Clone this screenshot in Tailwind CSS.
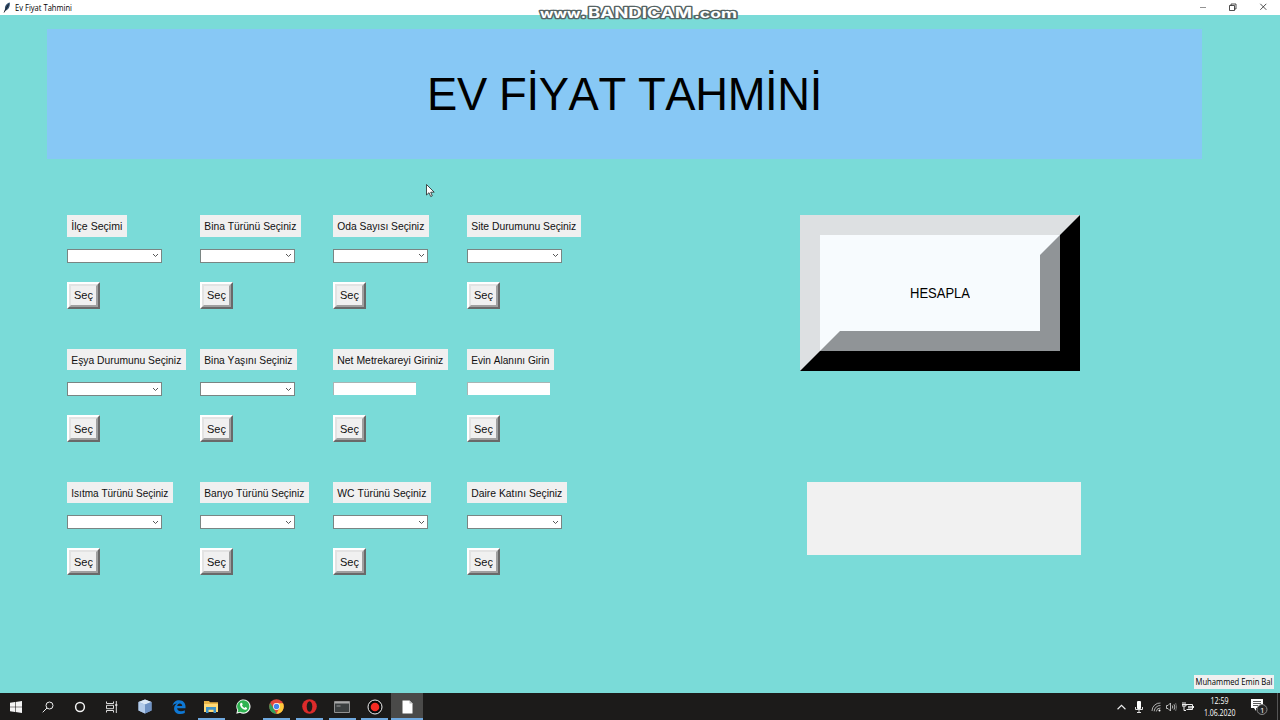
<!DOCTYPE html>
<html lang="tr">
<head>
    <meta charset="UTF-8">
    <meta name="viewport" content="width=device-width, initial-scale=1.0">
    <title>Ev Fiyat Tahmini</title>
    <script src="https://cdn.jsdelivr.net/npm/@tailwindcss/browser@4"></script>
    <style>
        body { font-family: "Liberation Sans", Arial, sans-serif; font-kerning: none; }
        .sys { font-family: "Open Sans", "Noto Sans", sans-serif; }
    </style>
</head>
<body class="relative w-[1280px] h-[720px] overflow-hidden bg-[#7adbd8] flex flex-col text-black">

    <!-- Title bar -->
    <div class="sys h-[15px] shrink-0 bg-white flex items-center pl-[3px]">
        <svg class="w-[8px] h-[11px]" viewBox="0 0 8 11">
            <path d="M1 10.5 2 7C1.500 4 4 1 6.800.5 7.300 4 5.500 8 2.500 8.500Z" fill="#345070"/>
            <path d="M1 10.500 5.500 2.500" stroke="#111" stroke-width=".8"/>
        </svg>
        <svg class="ml-[4px] w-[60px] h-[15px]"><text x="0" y="10.700" font-size="8.500" textLength="57" lengthAdjust="spacingAndGlyphs">Ev Fiyat Tahmini</text></svg>
        <svg class="ml-auto w-[80px] h-[15px]" viewBox="0 0 80 15" fill="none" stroke="#222" stroke-width=".8">
            <path d="M0 7.500h6" stroke="#777"/>
            <path d="M29.500 5.500h5v5h-5zM31 5.500v-1.500h5v5h-1.500"/>
            <path d="M60.300 3.800l6 6M66.300 3.800l-6 6"/>
        </svg>
    </div>

    <!-- Header -->
    <h1 class="mt-[14px] ml-[47px] w-[1155px] h-[129.500px] shrink-0 bg-[#87c8f5] flex items-center justify-center text-[45.330px] tracking-[-0.350px] leading-none pt-[1px]">EV FİYAT TAHMİNİ</h1>

    <!-- Form + result -->
    <div class="mt-[56.830px] ml-[66.660px] flex h-[400px] shrink-0">
        <div id="form" class="grid grid-cols-[repeat(4,133.330px)] grid-rows-[repeat(3,133.330px)]"></div>
        <div class="ml-[200px] flex flex-col items-start">
            <button class="w-[280px] h-[156px] border-[20px] border-t-[#dde0e2] border-l-[#dde0e2] border-r-black border-b-black">
                <span class="flex w-full h-full items-center justify-center border-[20px] border-t-[#f7fbfe] border-l-[#f7fbfe] border-r-[#909497] border-b-[#909497] bg-[#f7fbfe]">
                    <svg class="w-[60px] h-[16px]"><text x="0" y="13" font-size="13.800" textLength="60" lengthAdjust="spacingAndGlyphs">HESAPLA</text></svg>
                </span>
            </button>
            <div class="mt-[111px] ml-[6.660px] w-[274.600px] h-[73px] bg-[#f1f1f1]"></div>
        </div>
    </div>
    <div class="sys mt-[60px] mr-[6px] self-end w-[80px] h-[14px] shrink-0 bg-[#f0f0f0]">
        <svg class="w-[80px] h-[14px]"><text x="1.500" y="10" font-size="8.500" textLength="77" lengthAdjust="spacingAndGlyphs">Muhammed Emin Bal</text></svg>
    </div>

    <!-- Taskbar -->
    <div class="mt-auto h-[27px] shrink-0 bg-[#1c1b1a] flex items-stretch">
        <div class="flex w-[32px] items-center justify-center">
            <svg class="w-[12px] h-[12px]" viewBox="0 0 12 12" fill="#f4f4f4"><path d="M0 1.700 5 1v4.700H0zM5.600.9 12 0v5.700H5.600zM0 6.300h5V11l-5-.7zM5.600 6.300H12V12l-6.400-.9z"/></svg>
        </div>
        <div class="flex w-[32px] items-center justify-center">
            <svg class="w-[12px] h-[12px]" viewBox="0 0 12 12" fill="none" stroke="#eee"><circle cx="7.500" cy="4.500" r="3.500"/><path d="M5 7 .7 11.300"/></svg>
        </div>
        <div class="flex w-[32px] items-center justify-center">
            <svg class="w-[12px] h-[12px]" viewBox="0 0 12 12" fill="none" stroke="#f2f2f2" stroke-width="1.500"><circle cx="6" cy="6" r="4.400"/></svg>
        </div>
        <div class="flex w-[32px] items-center justify-center">
            <svg class="w-[12px] h-[12px]" viewBox="0 0 12 12" fill="none" stroke="#ddd"><path d="M.5.500v2h7v-2M.5 11.500v-2h7v2M.5 4.300h7v3.400h-7zM10.300 0v12"/><path d="M9.300 4h2" stroke-width="2"/></svg>
        </div>
        <div class="flex w-[34px] items-center justify-center">
            <svg class="w-[14px] h-[15px]" viewBox="0 0 14 15"><path d="M7 .5 13.500 3v8.500L7 14.500.5 11.500V3z" fill="#8faed5"/><path d="M7 .5 13.500 3 7 5.500.5 3z" fill="#dce8f6"/><path d="M7 5.500v9l6.500-3V3z" fill="#6f92c4"/><path d="M7 5.500v9L.5 11.500V3z" fill="#b3cbe9"/></svg>
        </div>
        <div class="flex w-[33px] items-center justify-center">
            <svg class="w-[14px] h-[14px]" viewBox="0 0 14 14"><path d="M.5 6C1.200 2.300 3.700.3 7.200.3c4 0 6.300 2.900 6.300 6.300v1.600H5.100c.2 2.100 1.800 3 3.900 3 1.500 0 2.700-.4 3.800-1v2.700c-1.200.7-2.700 1.100-4.500 1.100-3.900 0-6.200-2.300-6.200-5.600 0-2.400 1.300-4 3.200-4.900C3.300 3.500 1.600 4.200.5 6zm4.700 0h5C10.200 4.400 9.300 3.500 7.900 3.500 6.400 3.500 5.400 4.600 5.200 6z" fill="#0f78d4"/></svg>
        </div>
        <div class="relative flex w-[32px] items-center justify-center">
            <svg class="w-[14px] h-[13px]" viewBox="0 0 14 13"><path d="M0 1h5l1 1.300h8V12H0z" fill="#e9b548"/><path d="M0 4h14v8H0z" fill="#ffda77"/><path d="M2 7h10v6H9.500V9.700h-5V13H2z" fill="#3e93c8"/></svg>
            <i class="absolute bottom-0 left-[3px] w-[27px] h-[2px] bg-[#6fa9df]"></i>
        </div>
        <div class="flex w-[33px] items-center justify-center">
            <svg class="w-[15px] h-[15px]" viewBox="0 0 15 15"><path d="M.3 14.700 1.200 11A7.100 7.100 0 1 1 4 13.800z" fill="#f3f8f4"/><path d="M1.700 13.300 2.300 11A6.100 6.100 0 1 1 4.200 12.700z" fill="#2fb351"/><path d="M4.700 4 6 3.800 6.700 5.600 6 6.500c.6 1.100 1.300 1.800 2.500 2.400l.9-.9 1.700.9c0 1.400-1.100 2-2.200 1.900C6.400 10.400 4 7.500 4 5.600Q4 4.500 4.700 4z" fill="#fff"/></svg>
        </div>
        <div class="relative flex w-[33px] items-center justify-center">
            <svg class="w-[15px] h-[15px]" viewBox="0 0 15 15"><circle cx="7.500" cy="7.500" r="7.300" fill="#e2483c"/><path d="M1.200 3.900 5 10 7.500 14.800A7.300 7.300 0 0 1 1.200 3.900z" fill="#2fa15a"/><path d="M14 4.200H7.500L10.400 9.200 7.300 14.800A7.300 7.300 0 0 0 14 4.200z" fill="#fcca3b"/><circle cx="7.500" cy="7.500" r="3.400" fill="#fff"/><circle cx="7.500" cy="7.500" r="2.700" fill="#4385ec"/></svg>
            <i class="absolute bottom-0 left-[3px] w-[27px] h-[2px] bg-[#6fa9df]"></i>
        </div>
        <div class="relative flex w-[33px] items-center justify-center">
            <svg class="w-[15px] h-[15px]" viewBox="0 0 15 15"><circle cx="7.500" cy="7.500" r="7.300" fill="#dc2b2b"/><ellipse cx="7.500" cy="7.500" rx="2.800" ry="5.300" fill="#1c1b1a"/></svg>
            <i class="absolute bottom-0 left-[3px] w-[27px] h-[2px] bg-[#6fa9df]"></i>
        </div>
        <div class="relative flex w-[32px] items-center justify-center">
            <svg class="w-[16px] h-[12px]" viewBox="0 0 16 12"><path d="M.5.500h15v11H.5z" fill="#3b3f40" stroke="#909090"/><path d="M1 1h14v1.500H1z" fill="#aaa"/><path d="M2.500 5h4" stroke="#999"/></svg>
            <i class="absolute bottom-0 left-[3px] w-[27px] h-[2px] bg-[#6fa9df]"></i>
        </div>
        <div class="relative flex w-[33px] items-center justify-center">
            <svg class="w-[16px] h-[16px]" viewBox="0 0 16 16"><circle cx="8" cy="8" r="7" fill="#090909" stroke="#eee"/><circle cx="8" cy="8" r="4.300" fill="#f52b22"/></svg>
            <i class="absolute bottom-0 left-[3px] w-[27px] h-[2px] bg-[#6fa9df]"></i>
        </div>
        <div class="relative flex w-[32px] items-center justify-center bg-[#4a4a49]">
            <svg class="w-[11px] h-[14px]" viewBox="0 0 11 14"><path d="M.5.500h7l3 3v10H.5z" fill="#fff"/><path d="M7.500.500v3h3z" fill="#bbb"/></svg>
            <i class="absolute bottom-0 left-0 w-[32px] h-[2px] bg-[#6fa9df]"></i>
        </div>

        <!-- Tray -->
        <div class="sys ml-auto flex items-center text-white">
            <svg class="w-[9px] h-[6px] mr-[6px]" viewBox="0 0 8 5" fill="none" stroke="#eee"><path d="M.5 4.500 4 1l3.500 3.500"/></svg>
            <svg class="ml-[3px] w-[8px] h-[12px]" viewBox="0 0 8 12"><rect x="2" y="0" width="4" height="8" rx="1" fill="#fff"/><path d="M.5 6v2.500h7V6M4 8.500v3M2 11.500h4" fill="none" stroke="#ddd"/></svg>
            <svg class="ml-[8px] w-[11px] h-[10px]" viewBox="0 0 11 10" fill="none" stroke="#c0c0c0" stroke-width=".9"><path d="M1 9A8 8 0 0 1 9.500 1M3.200 9.300A6 6 0 0 1 9.500 3.500M5.300 9.500A4 4 0 0 1 9.500 6"/><circle cx="8.500" cy="8.500" r="1" fill="#fff" stroke="none"/></svg>
            <svg class="ml-[4px] w-[11px] h-[10px]" viewBox="0 0 11 10" fill="none" stroke="#ccc" stroke-width=".9"><path d="M.5 3.500H2L4.500 1v8L2 6.500H.5zM6.300 3.500q1 1.500 0 3M8 2.300q1.800 2.700 0 5.400"/><path d="M9.600 1q2 4 0 8" stroke="#777"/></svg>
            <svg class="ml-[5px] w-[12px] h-[9px]" viewBox="0 0 12 9" fill="none" stroke="#eee"><path d="M3.500 2.500h7v5h-6M11.500 4v2"/><path d="M6 4h4v2.500H6z" fill="#bbb" stroke="none"/><path d="M1 0v2M3 0v2M0 2.500h4v1.500H0zM2 4v4.500h2"/></svg>
            <svg class="ml-[9px] w-[33px] h-[26px]" fill="#fff" font-size="8.500">
                <text x="7.500" y="9.500" textLength="18" lengthAdjust="spacingAndGlyphs">12:59</text>
                <text x="1" y="21.500" textLength="31.500" lengthAdjust="spacingAndGlyphs">1.06.2020</text>
            </svg>
            <div class="relative ml-[14px] mr-[8px] w-[19px] h-[18px]">
                <svg class="w-[19px] h-[18px]" viewBox="0 0 19 18"><path d="M1 1h12v9H6v3L4 10H1z" fill="#fff"/><path d="M3 3.500h8M3 5.500h8M3 7.500h5" stroke="#333" stroke-width=".8"/><circle cx="12" cy="11.500" r="5" fill="#252525" stroke="#888"/></svg>
                <span class="absolute left-[10px] top-[6px] text-[8px] leading-[11px]">1</span>
            </div>
            <i class="w-px h-[27px] bg-[#555] mr-[2px]"></i>
        </div>
    </div>

    <!-- Watermark -->
    <svg class="absolute left-[536px] top-0 w-[206px] h-[26px]" viewBox="0 0 206 26" font-family="Inter, 'Liberation Sans', sans-serif" font-weight="700" fill="#fff" stroke="#566464" stroke-width="2.600" stroke-linejoin="round" paint-order="stroke">
        <text x="4" y="17.800" font-size="12.500" textLength="46" lengthAdjust="spacingAndGlyphs">www.</text>
        <text x="52" y="17.800" font-size="15" textLength="104" lengthAdjust="spacingAndGlyphs">BANDICAM</text>
        <text x="158" y="17.800" font-size="12" textLength="43" lengthAdjust="spacingAndGlyphs">.com</text>
    </svg>

    <!-- Mouse pointer -->
    <svg class="absolute left-[426px] top-[184px] w-[9px] h-[14px]" viewBox="0 0 9 14"><path d="M.5.500v10.500L3 8.700l1.700 3.800 1.600-.7L4.700 8.200h3.500z" fill="#fff" stroke="#222" stroke-width=".8"/></svg>

    <script>
        // [label, label width, kind]
        const fields = [
            ['İlçe Seçimi', 60, 'combo'],
            ['Bina Türünü Seçiniz', 101, 'combo'],
            ['Oda Sayısı Seçiniz', 96, 'combo'],
            ['Site Durumunu Seçiniz', 114, 'combo'],
            ['Eşya Durumunu Seçiniz', 119, 'combo'],
            ['Bina Yaşını Seçiniz', 97, 'combo'],
            ['Net Metrekareyi Giriniz', 115, 'entry'],
            ['Evin Alanını Girin', 87, 'entry'],
            ['Isıtma Türünü Seçiniz', 106, 'combo'],
            ['Banyo Türünü Seçiniz', 109, 'combo'],
            ['WC Türünü Seçiniz', 98, 'combo'],
            ['Daire Katını Seçiniz', 100, 'combo'],
        ];

        const inputs = {
            combo: `<div class="w-[95px] h-[14px] bg-white border border-[#7a8583] flex items-center justify-end pr-[2px]">
                        <svg class="w-[7px] h-[5px]" viewBox="0 0 7 5" fill="none" stroke="#444" stroke-width=".9"><path d="M1 1l2.500 2.500L6 1"/></svg>
                    </div>`,
            entry: `<div class="w-[83px] h-[13px] mb-[1px] bg-white border-t border-l border-[#a9b5b4]"></div>`,
        };

        document.getElementById('form').innerHTML = fields.map(([text, width, kind]) => `
            <div class="flex flex-col items-start">
                <div class="h-[21.500px] bg-[#f0f0f0]" style="width:${width}px">
                    <svg class="w-full h-full"><text x="4.300" y="15" font-size="11.500" textLength="${width - 9}" lengthAdjust="spacingAndGlyphs" fill="#111">${text}</text></svg>
                </div>
                <div class="mt-[12px]">${inputs[kind]}</div>
                <button class="mt-[19px] w-[33px] h-[27px] border-2 border-t-white border-l-white border-r-[#696969] border-b-[#696969]">
                    <span class="flex w-full h-full items-center justify-center border-2 border-t-[#e3e3e3] border-l-[#e3e3e3] border-r-[#a0a0a0] border-b-[#a0a0a0] bg-[#f0f0f0]">
                        <svg class="w-[19px] h-[16px]"><text x="0" y="12.200" font-size="11.500" textLength="19" lengthAdjust="spacingAndGlyphs" fill="#111">Seç</text></svg>
                    </span>
                </button>
            </div>`).join('');
    </script>
</body>
</html>
